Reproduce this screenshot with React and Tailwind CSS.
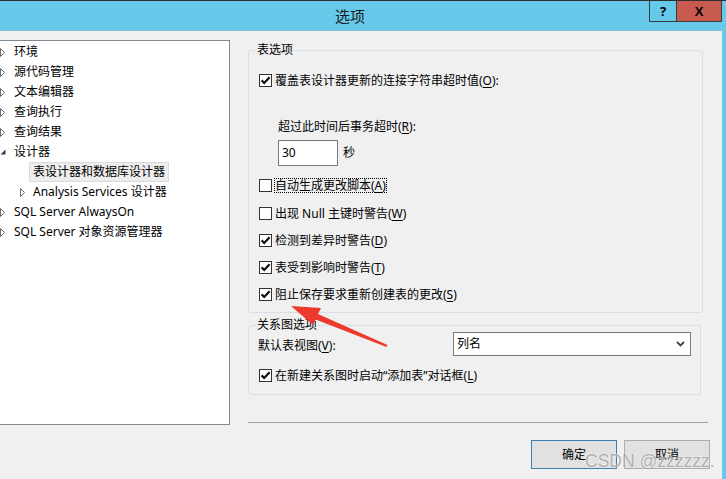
import React from 'react';

const tree = [
  { label: '环境', level: 0, arrow: 'closed' },
  { label: '源代码管理', level: 0, arrow: 'closed' },
  { label: '文本编辑器', level: 0, arrow: 'closed' },
  { label: '查询执行', level: 0, arrow: 'closed' },
  { label: '查询结果', level: 0, arrow: 'closed' },
  { label: '设计器', level: 0, arrow: 'open' },
  { label: '表设计器和数据库设计器', level: 1, arrow: null, selected: true },
  { label: 'Analysis Services 设计器', level: 1, arrow: 'closed' },
  { label: 'SQL Server AlwaysOn', level: 0, arrow: 'closed' },
  { label: 'SQL Server 对象资源管理器', level: 0, arrow: 'closed' },
];

function Arrow({ type }) {
  if (type === 'open') {
    return (
      <svg width="6" height="6" viewBox="0 0 6 6">
        <path d="M5.5 0.5 L5.5 5.5 L0.5 5.5 Z" fill="#3c3c3c" />
      </svg>
    );
  }
  if (type === 'closed') {
    return (
      <svg width="6" height="9" viewBox="0 0 6 9">
        <path d="M0.5 0.5 L4.5 4.5 L0.5 8.5 Z" fill="none" stroke="#6a6a6a" strokeWidth="1" />
      </svg>
    );
  }
  return null;
}

function U({ children }) {
  return <span className="underline underline-offset-[2px] decoration-1">{children}</span>;
}

function Check({ checked }) {
  return (
    <span className="w-[13px] h-[13px] border border-[#333] bg-white flex items-center justify-center shrink-0">
      {checked && (
        <svg width="11" height="11" viewBox="0 0 11 11">
          <path d="M1.6 5.4 L4.2 8 L9.6 2.2" stroke="#111" strokeWidth="2.2" fill="none" />
        </svg>
      )}
    </span>
  );
}

function CheckRow({ checked, focus, className = '', children }) {
  return (
    <div className={'flex items-center h-[20px] ' + className}>
      <Check checked={checked} />
      <span
        className={
          'ml-[2px] leading-[15px] ' +
          (focus ? 'outline outline-1 outline-dotted outline-black -outline-offset-1 px-[1px]' : 'px-[1px]')
        }
      >
        {children}
      </span>
    </div>
  );
}

export default function App() {
  return (
    <div className="relative w-[726px] h-[479px] overflow-hidden bg-[#F0F0F0] text-[12px] text-black font-['Noto_Sans','Noto_Sans_CJK_SC',sans-serif]">
      {/* title bar */}
      <div className="h-[31px] border-t border-t-[#2e2e2e] border-b border-b-[#86bfd8] bg-[#66C9E9] flex items-start">
        <span className="ml-[335px] mt-[5px] text-[15px] leading-[20px] text-[#1c1c1c] font-['Noto_Sans_CJK_SC',sans-serif]">
          选项
        </span>
        <div className="ml-auto mr-[4px] flex border-l border-b border-[#3a3a3a]">
          <div className="w-[27px] h-[20px] flex items-center justify-center border-r border-[#3a3a3a] text-[13px] font-bold leading-none">
            ?
          </div>
          <div className="w-[45px] h-[20px] bg-[#C75B50] border-r border-[#3a3a3a] flex items-center justify-center text-[13px] font-bold leading-none font-['Liberation_Sans',sans-serif]">
            X
          </div>
        </div>
      </div>

      {/* body */}
      <div className="h-[448px] flex border-r-4 border-[#66C9E9]">
        {/* tree */}
        <div className="mt-[9px] w-[230px] h-[385px] bg-white border-t border-r border-b border-[#828790] pt-[1px]">
          {tree.map((item) => (
            <div key={item.label} className={'flex items-center h-[20px] leading-[20px] ' + (item.level ? 'pl-[20px]' : 'pl-[0px]')}>
              {item.selected ? (
                <span className="ml-[9px] px-[3px] h-[20px] leading-[18px] border border-[#DADADA] bg-[#EDEDED]">
                  {item.label}
                </span>
              ) : (
                <>
                  <span className={'flex items-center ' + (item.level ? 'w-[13px]' : 'w-[14px] pl-[0px]')}>
                    <Arrow type={item.arrow} />
                  </span>
                  <span>{item.label}</span>
                </>
              )}
            </div>
          ))}
        </div>

        {/* right side */}
        <div className="ml-[18px] w-[474px] pt-[11px] flex flex-col">
          <fieldset className="w-[455px] border border-[#D5DFE5] rounded-[3px] pb-[8px]">
            <legend className="ml-[7px] px-[1px] leading-[16px]">表选项</legend>
            <div className="pl-[10px]">
              <CheckRow checked className="mt-[12px]">
                覆盖表设计器更新的连接字符串超时值(<U>O</U>):
              </CheckRow>
              <div className="mt-[27px] pl-[19px] h-[20px] leading-[20px]">
                超过此时间后事务超时(<U>R</U>):
              </div>
              <div className="mt-[3px] pl-[19px] flex items-center">
                <div className="w-[60px] h-[26px] bg-white border border-[#7A7A7A] pl-[3px] leading-[24px]">30</div>
                <span className="ml-[5px]">秒</span>
              </div>
              <CheckRow focus className="mt-[9px]">
                自动生成更改脚本(<U>A</U>)
              </CheckRow>
              <CheckRow className="mt-[8px]">
                出现 Null 主键时警告(<U>W</U>)
              </CheckRow>
              <CheckRow checked className="mt-[7px]">
                检测到差异时警告(<U>D</U>)
              </CheckRow>
              <CheckRow checked className="mt-[7px]">
                表受到影响时警告(<U>T</U>)
              </CheckRow>
              <CheckRow checked className="mt-[7px]">
                阻止保存要求重新创建表的更改(<U>S</U>)
              </CheckRow>
            </div>
          </fieldset>

          <fieldset className="mt-[4px] w-[453px] border border-[#D5DFE5] rounded-[3px] pb-[9px]">
            <legend className="ml-[7px] px-[1px] leading-[16px]">关系图选项</legend>
            <div className="pl-[9px] pr-[9px]">
              <div className="-mt-[1px] h-[24px] flex items-center justify-between">
                <span className="mt-[3px]">
                  默认表视图(<U>V</U>):
                </span>
                <div className="w-[238px] h-[24px] bg-white border border-[#7A7A7A] flex items-center pl-[3px] pr-[5px]">
                  <span className="flex-1">列名</span>
                  <svg width="9" height="6" viewBox="0 0 9 6">
                    <path d="M1 1 L4.5 4.5 L8 1" stroke="#444" strokeWidth="1.8" fill="none" />
                  </svg>
                </div>
              </div>
              <CheckRow checked className="mt-[9px] ml-[1px]">
                在新建关系图时启动“添加表”对话框(<U>L</U>)
              </CheckRow>
            </div>
          </fieldset>

          <div className="mt-[27px] h-px w-[460px] bg-[#A0A0A0]" />

          <div className="mt-[17px] flex justify-end gap-[7px] pr-[12px]">
            <button className="w-[86px] h-[29px] bg-[#E1E1E1] border border-[#3C7FB1] text-[12px]">确定</button>
            <button className="w-[86px] h-[29px] bg-[#E1E1E1] border border-[#ADADAD] text-[12px]">取消</button>
          </div>
        </div>
      </div>

      {/* red annotation arrow */}
      <svg className="absolute inset-0 pointer-events-none" width="726" height="479" viewBox="0 0 726 479">
        <polygon
          points="291,306 321,308 318,314 387.5,345 386.5,347 315.6,319.6 313,325"
          fill="#EE3A2C"
        />
      </svg>

      {/* watermark */}
      <div className="absolute left-[585px] top-[451px] text-[17.5px] leading-[20px] text-[#909090]/70 [text-shadow:0_0_2px_#fff] font-['Liberation_Sans',sans-serif] pointer-events-none">
        CSDN @zzzzzz.
      </div>
    </div>
  );
}
